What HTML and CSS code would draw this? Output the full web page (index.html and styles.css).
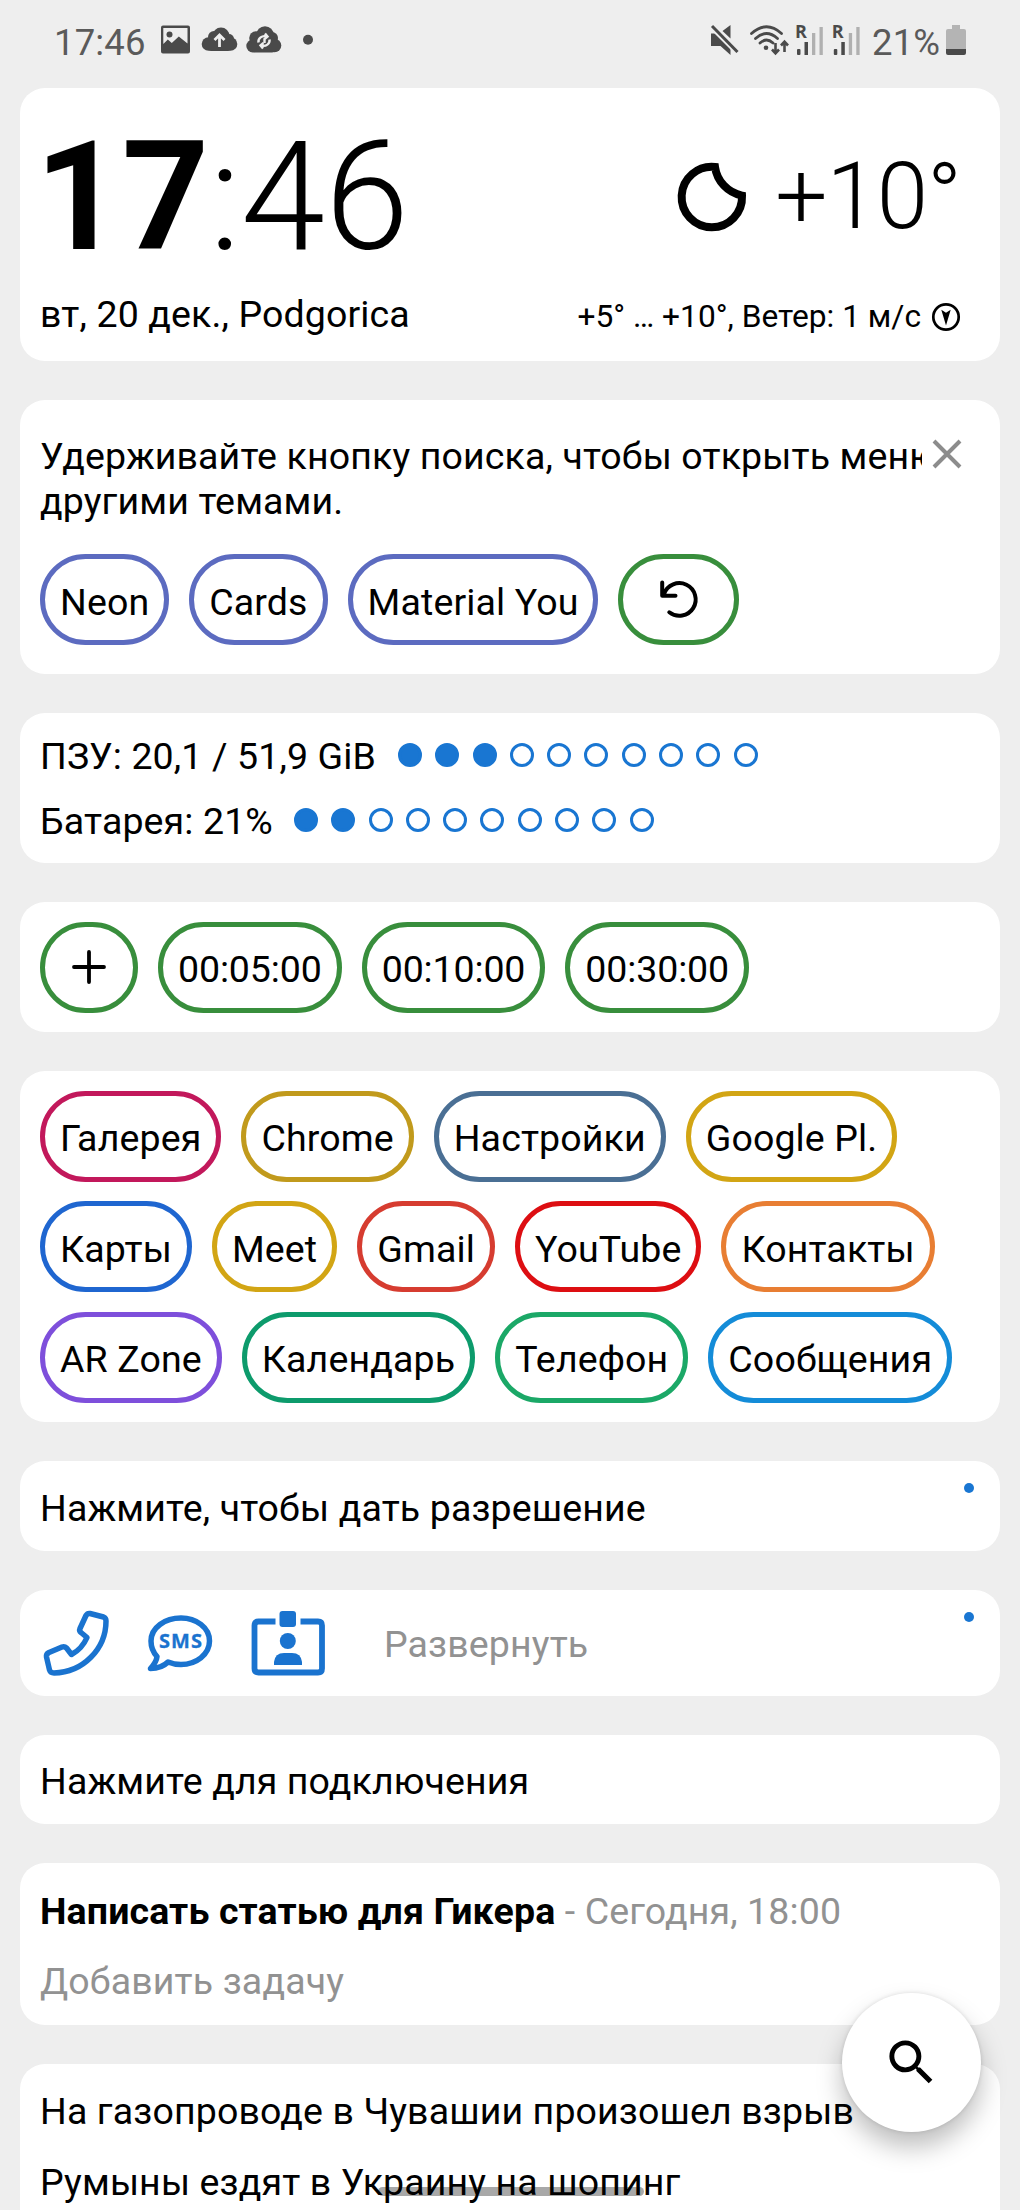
FILE: index.html
```html
<!DOCTYPE html>
<html lang="ru">
<head>
<meta charset="utf-8">
<title>Launcher</title>
<link rel="stylesheet" href="styles.css">
</head>
<body>
<header class="status">
  <span class="status-time">17:46</span>
  <svg class="st-icons" width="156" height="34" viewBox="158 22 156 34">
    <path class="ink" fill-rule="evenodd" d="M163 25.500h25a2 2 0 0 1 2 2v24a2 2 0 0 1-2 2h-25a2 2 0 0 1-2-2v-24a2 2 0 0 1 2-2zM163.300 28v16l4.500-4.500 4 3.500 7-6.500 8.700 7V28z"/>
    <circle class="ink" cx="169.500" cy="34.500" r="3"/>
    <g class="ink"><circle cx="208.500" cy="44" r="6.800"/><circle cx="214" cy="37" r="6"/><circle cx="221" cy="36" r="8.500"/><circle cx="229" cy="39" r="5"/><circle cx="230.500" cy="44" r="6.800"/><rect x="208" y="38" width="23" height="13" rx="3"/></g>
    <path class="knock" d="M219.500 47V35.500M214.500 40l5-5 5 5"/>
    <g class="ink"><circle cx="252.800" cy="46" r="6.500"/><circle cx="256" cy="38" r="6.800"/><circle cx="265" cy="35" r="8.800"/><circle cx="272" cy="38" r="6"/><circle cx="274.500" cy="45.500" r="6.800"/><rect x="252" y="38" width="23" height="14.500" rx="3"/></g>
    <path class="knock thin" d="M258.500 42.500a6 5.500 0 0 1 8-6M265 33.500l2.500 3-3 2.500v4M269.500 39.500a6 5.500 0 0 1-8 6M263 48.500l-2.500-3 3-2.500"/>
    <circle class="ink" cx="308" cy="39.700" r="5"/>
  </svg>
  <svg class="st-right" width="158" height="34" viewBox="708 22 158 34">
    <path class="ink" d="M711 33.500h8l11.500 11.500v10l-10-9h-9.500zM722.500 31l8-6v13.500z"/>
    <path d="M711 26.500l26 26" stroke="#eee" stroke-width="5"/>
    <path d="M712 26l25.500 26" stroke="#4a4a4a" stroke-width="3"/>
    <g fill="none" stroke="#4a4a4a" stroke-width="2.800" stroke-linecap="round"><path d="M751.500 33.500q15-13.500 30 0M755.500 38.500q11-10 22 0M760 43q6.500-6 13 0"/></g>
    <circle class="ink" cx="766" cy="47.800" r="2.300"/>
    <path d="M775.500 43v10M772 49.500l3.500 3.800 3.500-3.800M784.500 52V42M781 45.500l3.500-3.800 3.500 3.800" fill="none" stroke="#4a4a4a" stroke-width="2.600"/>
    <g id="signal"><text class="roam" x="795" y="38">R</text><rect class="ink" x="797" y="49" width="3.500" height="6" rx="1"/><rect class="ink" x="804.500" y="42" width="3.500" height="13"/><rect x="812" y="33" width="3.300" height="22" fill="#b0b0b0"/><rect x="819.500" y="27" width="3.300" height="28" fill="#b0b0b0"/></g>
    <use href="#signal" x="36.800"/>
  </svg>
  <span class="status-pct">21%</span>
  <svg class="st-bat" width="20" height="32" viewBox="946 24 20 32"><path d="M952 25h8v4h4q2 0 2 2v19h-20V31q0-2 2-2h4z" fill="#b4b4b4"/><path d="M946 49h20v4q0 2-2 2h-16q-2 0-2-2z" fill="#4a4a4a"/></svg>
</header>

<main class="feed">
  <section class="card clock-card">
    <div class="clock-col">
      <div class="clock"><b>17</b>:46</div>
      <div class="date">вт, 20 дек., Podgorica</div>
    </div>
    <div class="weather-col">
      <div class="temp">
        <svg width="72" height="72" viewBox="675 160 72 72"><path d="M713 166A34 34 0 0 0 740 194.600A30.200 30.200 0 1 1 713 166z" fill="none" stroke="#000" stroke-width="8"/></svg>
        <span>+10°</span>
      </div>
      <div class="forecast"><span>+5° … +10°, Ветер: 1 м/с</span>
        <svg width="30" height="30" viewBox="0 0 30 30"><circle cx="15" cy="15" r="12.700" fill="none" stroke="#000" stroke-width="2.700"/><path d="M10.300 7.700l4.700 3 4.700-3L15 23.500z"/></svg>
      </div>
    </div>
  </section>

  <section class="card tips">
    <div class="tip-row">
      <p class="tip">Удерживайте кнопку поиска, чтобы открыть меню с<br>другими темами.</p>
      <svg class="close" width="30" height="30" viewBox="0 0 30 30"><path d="M2 2l26 26M28 2L2 28" stroke="#8c8c8c" stroke-width="4"/></svg>
    </div>
    <div class="chips">
      <span class="chip indigo">Neon</span><span class="chip indigo">Cards</span><span class="chip indigo">Material You</span>
      <span class="chip green reset"><svg width="42" height="42" viewBox="660 579 42 42"><path d="M671.300 612.300A16.300 16.300 0 1 0 666 594M664.200 582.500v13.200h13.300" fill="none" stroke="#000" stroke-width="4" stroke-linecap="round" stroke-linejoin="round"/></svg></span>
    </div>
  </section>

  <section class="card meters">
    <div class="meter"><span>ПЗУ: 20,1 / 51,9 GiB</span><div class="dots"><i class="on"></i><i class="on"></i><i class="on"></i><i></i><i></i><i></i><i></i><i></i><i></i><i></i></div></div>
    <div class="meter battery"><span>Батарея: 21%</span><div class="dots"><i class="on"></i><i class="on"></i><i></i><i></i><i></i><i></i><i></i><i></i><i></i><i></i></div></div>
  </section>

  <section class="card timers">
    <div class="chips">
      <span class="chip green add"><svg width="36" height="36" viewBox="0 0 36 36"><path d="M18 3v30M3 18h30" stroke="#000" stroke-width="3.800" stroke-linecap="round"/></svg></span>
      <span class="chip green">00:05:00</span><span class="chip green">00:10:00</span><span class="chip green">00:30:00</span>
    </div>
  </section>

  <section class="card apps">
    <div class="chips"><span class="chip c-gallery">Галерея</span><span class="chip c-chrome">Chrome</span><span class="chip c-settings">Настройки</span><span class="chip c-play">Google Pl.</span></div>
    <div class="chips"><span class="chip c-maps">Карты</span><span class="chip c-meet">Meet</span><span class="chip c-gmail">Gmail</span><span class="chip c-youtube">YouTube</span><span class="chip c-contacts">Контакты</span></div>
    <div class="chips"><span class="chip c-ar">AR Zone</span><span class="chip c-calendar">Календарь</span><span class="chip c-phone">Телефон</span><span class="chip c-messages">Сообщения</span></div>
  </section>

  <section class="card line">Нажмите, чтобы дать разрешение<i class="badge"></i></section>

  <section class="card contacts">
    <svg width="66" height="66" viewBox="0 0 66 66"><path d="M47 3.500L60.500 7Q63 8 63 11C63 39 40 62.500 11 63Q7.500 63 6.500 60L3.500 47Q3 44 6 42.500L19 37Q21.500 36 23.500 38L28.500 44.500Q39 39 44 27.500L38 22.500Q36 21 37 18.500L43 5.500Q44.500 3 47 3.500Z" fill="none" stroke="#1a73cf" stroke-width="5.500" stroke-linejoin="round"/></svg>
    <svg width="66" height="58" viewBox="147 1614 66 58"><path d="M181 1618C196 1618 209.500 1627.500 209.500 1641S196 1664.500 181 1664.500Q174 1664.500 168 1662Q161.500 1668.500 150.500 1668.500Q156.500 1662 157 1656.500Q151 1650 151 1641C151 1627.500 165 1618 181 1618Z" fill="none" stroke="#1a73cf" stroke-width="5.500" stroke-linejoin="round"/><text class="sms" x="181" y="1647.500" text-anchor="middle">SMS</text></svg>
    <svg width="74" height="66" viewBox="251.500 1610 74 66"><path d="M276 1621.500h-17q-4 0-4 4v43q0 4 4 4h59.500q4 0 4-4v-43q0-4-4-4h-17.500" fill="none" stroke="#1a73cf" stroke-width="5.800"/><g fill="#1a73cf"><rect x="280" y="1611" width="16.500" height="16" rx="3"/><circle cx="288.300" cy="1641" r="8"/><path d="M274.500 1665v-3q1-9 10-9h8q9 0 10 9v3z"/></g></svg>
    <span class="muted">Развернуть</span><i class="badge"></i>
  </section>

  <section class="card line connect">Нажмите для подключения</section>

  <section class="card tasks">
    <p><b>Написать статью для Гикера</b><span class="muted"> - Сегодня, 18:00</span></p>
    <p class="muted">Добавить задачу</p>
  </section>

  <section class="card news">
    <p>На газопроводе в Чувашии произошел взрыв</p>
    <p>Румыны ездят в Украину на шопинг</p>
  </section>
</main>

<div class="handle"></div>
<div class="fab"><svg width="59" height="59" viewBox="0 0 24 24"><path d="M15.500 14h-.79l-.28-.27A6.471 6.471 0 0 0 16 9.500 6.500 6.500 0 1 0 9.500 16c1.610 0 3.090-.59 4.230-1.570l.27.28v.79l5 4.990L20.490 19l-4.990-5zm-6 0C7.010 14 5 11.990 5 9.500S7.010 5 9.500 5 14 7.010 14 9.500 11.990 14 9.500 14z"/></svg></div>
</body>
</html>
```
FILE: styles.css
```css
* { box-sizing: border-box; }
body {
  margin: 0;
  width: 1020px;
  height: 2210px;
  overflow: hidden;
  position: relative;
  background: #eee;
  color: #000;
  font: 400 37.500px/44px Roboto, "Noto Sans", sans-serif;
  letter-spacing: .13px;
}
p { margin: 0; }
svg { display: block; flex: none; overflow: visible; }

.status {
  height: 88px;
  padding: 22px 54px 0;
  display: flex;
  align-items: flex-start;
  color: #5a5a5a;
  font-size: 36.500px;
  line-height: 41px;
}
.status-time { width: 104px; }
.st-right { margin-left: 394px; }
.status-pct { width: 74px; padding-left: 6px; }
.st-bat { margin: 2px 0 0 6px; }
.ink { fill: #4a4a4a; }
.knock { fill: none; stroke: #eee; stroke-width: 2.800px; }
.knock.thin { stroke-width: 2.400px; }
.roam { font: 700 18px/1 "Open Sans", sans-serif; fill: #4a4a4a; }

.feed { padding: 0 20px; display: flex; flex-direction: column; gap: 39px; }
.card { position: relative; flex: none; background: #fff; border-radius: 25px; padding: 0 20px; }

.clock-card { height: 272.500px; display: flex; justify-content: space-between; }
.clock-col { padding-top: 33px; }
.clock { margin-left: -5px; font-size: 152px; line-height: 152px; font-weight: 300; white-space: nowrap; letter-spacing: -.200px; }
.clock b { font-weight: 700; }
.date { margin-top: 19px; }
.weather-col { padding: 62px 19px 0 0; display: flex; flex-direction: column; align-items: flex-end; }
.temp { display: flex; align-items: center; gap: 26px; font-size: 92.500px; line-height: 93px; font-weight: 300; letter-spacing: -1px; }
.forecast { margin-top: 55px; display: flex; align-items: center; gap: 10px; font-size: 31.700px; line-height: 38px; white-space: nowrap; letter-spacing: 0; }

.tips { height: 274.500px; padding-top: 34px; }
.tip-row { display: flex; }
.tip { width: 882px; height: 91px; overflow: hidden; white-space: nowrap; line-height: 45.500px; }
.close { margin: 5px 0 0 9.500px; }
.tips .chips { margin-top: 29.500px; }

.chips { display: flex; gap: 20px; }
.chip {
  height: 91px;
  padding: 4px 15px 0;
  border: 5px solid;
  border-radius: 46px;
  display: flex;
  align-items: center;
  justify-content: center;
  white-space: nowrap;
}
.chip.reset { width: 121px; padding: 0; }
.chip.add { width: 98px; padding: 0; }
.indigo { border-color: #5c6bc0; }
.green { border-color: #388e3c; }

.meters { height: 150px; padding-top: 10.500px; }
.meter { height: 65px; display: flex; align-items: center; }
.meter span { margin-right: 22px; }
.meter.battery span { margin-right: 21px; }
.dots { display: flex; gap: 13.300px; margin-bottom: 2px; }
.dots i { width: 24px; height: 24px; border: 3.500px solid #1976d2; border-radius: 50%; }
.dots .on { background: #1976d2; }

.timers { height: 130px; padding-top: 19.500px; letter-spacing: -.12px; }

.apps { height: 351px; padding-top: 19.700px; display: flex; flex-direction: column; gap: 19.500px; }
.c-gallery { border-color: #c2185b; }
.c-chrome { border-color: #c19a1c; }
.c-settings { border-color: #4a6f94; }
.c-play { border-color: #d2a514; }
.c-maps { border-color: #1f66d0; }
.c-meet { border-color: #d2a514; }
.c-gmail { border-color: #d63c30; }
.c-youtube { border-color: #dd0e12; }
.c-contacts { border-color: #e87e33; }
.c-ar { border-color: #7e4fdb; }
.c-calendar { border-color: #0d9b6c; }
.c-phone { border-color: #1ba867; }
.c-messages { border-color: #148cd8; }

.line { height: 90px; padding-top: 4px; display: flex; align-items: center; }
.connect { height: 89.500px; }
.badge { position: absolute; right: 26px; top: 22px; width: 10px; height: 10px; border-radius: 50%; background: #1976d2; }
.contacts { height: 105.500px; padding-left: 23px; display: flex; align-items: center; }
.contacts svg + svg { margin-left: 38px; }
.contacts .muted { margin: 3px 0 0 59px; }
.sms { font: 700 20px "Open Sans", sans-serif; fill: #1a73cf; stroke: #1a73cf; stroke-width: .3px; letter-spacing: 1px; }
.muted { color: #929292; }

.tasks { height: 162px; padding-top: 12.500px; line-height: 70.500px; }
.tasks p { white-space: pre; }
.news { height: 200px; padding-top: 12px; line-height: 70.500px; }

.handle { position: absolute; left: 378px; top: 2187px; width: 266px; height: 9px; border-radius: 5px; background: rgba(0, 0, 0, .34); }
.fab {
  position: absolute;
  left: 842px;
  top: 1993px;
  width: 139px;
  height: 139px;
  border-radius: 50%;
  background: #fff;
  display: flex;
  align-items: center;
  justify-content: center;
  box-shadow: 0 15px 26px rgba(0, 0, 0, .26), 0 0 4px rgba(0, 0, 0, .12);
}
```
